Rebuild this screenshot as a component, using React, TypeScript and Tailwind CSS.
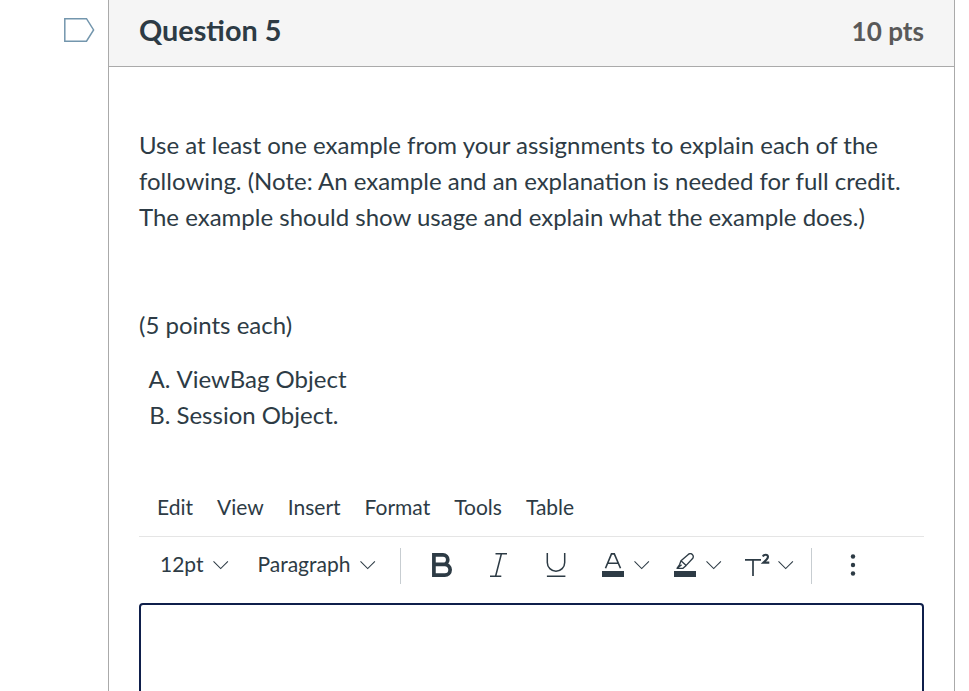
import React from "react";

function Chevron({ className = "" }: { className?: string }) {
  return (
    <svg className={`h-[10px] w-4 shrink-0 ${className}`} viewBox="0 0 16 10" fill="none" stroke="#2d3b45" strokeWidth="1.05">
      <path d="M.5 1.3 7.7 8.6 14.9 1.3" />
    </svg>
  );
}

function Divider({ className = "" }: { className?: string }) {
  return <div className={`mt-0.5 h-9 w-px shrink-0 bg-[#c7cdd1] ${className}`} />;
}

function BoldIcon() {
  return (
    <svg className="ml-[31px] h-6 w-5 shrink-0" viewBox="0 0 20 24" fill="none" stroke="#2d3b45" strokeWidth="3.7">
      <path d="M1.9 1.85H11a4.7 4.7 0 0 1 0 9.6H1.9M11 11.45h1.8a5.3 5.3 0 0 1 0 10.7H1.9V0" />
    </svg>
  );
}

function ItalicIcon() {
  return (
    <svg className="ml-[38px] h-6 w-[17px] shrink-0" viewBox="0 0 17 24" fill="none" stroke="#2d3b45" strokeWidth="1.5">
      <path d="M5.5.8H17M0 23.2h11.3M11.4.8 5.6 23.2" />
    </svg>
  );
}

function UnderlineIcon() {
  return (
    <svg className="ml-[39px] h-6 w-5 shrink-0" viewBox="0 0 20 24" fill="none" stroke="#2d3b45" strokeWidth="1.5">
      <path d="M1.3 0v9.5a8.7 8.7 0 0 0 17.4 0V0M.9 23.2h18.5" />
    </svg>
  );
}

function TextColorIcon() {
  return (
    <svg className="ml-9 h-6 w-[22px] shrink-0" viewBox="0 0 22 24" fill="none">
      <path d="M3.5 15.3 9.5.9h2.8l6.2 14.4M5.5 10.3h11" stroke="#2d3b45" strokeWidth="1.6" />
      <path d="M0 18h22v6H0z" fill="#2d3b45" />
    </svg>
  );
}

function HighlightIcon() {
  return (
    <svg className="ml-6 h-6 w-[22px] shrink-0" viewBox="0 0 22 24" fill="none">
      <path
        d="M7 7.8 14.3 1.4Q16.6-.2 18.3 1.5T18.8 5.3L12.2 12.4ZM7 7.8 5.6 11.6 3 15.3h6l3.2-2.9M3.2 15.3l4.4-3.6"
        stroke="#2d3b45"
        strokeWidth="1.35"
        strokeLinejoin="round"
      />
      <path d="M0 18h22v6H0z" fill="#2d3b45" />
    </svg>
  );
}

function SuperscriptIcon() {
  return (
    <svg className="ml-[23px] h-6 w-[25px] shrink-0" viewBox="0 0 25 24" fill="none" stroke="#2d3b45">
      <path d="M0 6.8h16M8 6.8V23" strokeWidth="1.7" />
      <path d="M17.9 3.5Q18.6 1.7 20.7 1.7T23 3.8Q23 5 21.6 6.4L18.3 9.6H24.3" strokeWidth="2.1" />
    </svg>
  );
}

function MoreIcon() {
  return (
    <svg className="ml-[38px] h-6 w-[6px] shrink-0" viewBox="0 0 6 24" fill="#2d3b45">
      <circle cx="3" cy="3.5" r="2.2" />
      <circle cx="3" cy="12" r="2.2" />
      <circle cx="3" cy="20.5" r="2.2" />
    </svg>
  );
}

export default function App() {
  return (
    <div className="flex h-[691px] w-[969px] overflow-hidden bg-white font-['Lato',sans-serif] text-[24px] leading-9 text-[#2d3b45]">
      <aside className="w-[108px] shrink-0 pt-[17px] pl-16">
        <svg className="h-[26px] w-[31px]" viewBox="0 0 31 26" fill="none" stroke="#7396ad" strokeWidth="1.5">
          <path d="M.8 1.7h21.7l7.1 11.2-7.1 11.3H.8z" />
        </svg>
      </aside>

      <main className="w-[847px] shrink-0 border-x border-[#aaaaaa]">
        <header className="flex h-[67px] justify-between border-b border-[#aaaaaa] bg-[#f5f5f5] px-[30px] font-bold">
          <h1 className="pt-[12px] text-[28.8px]">Question 5</h1>
          <span className="pt-[13px] text-[26.1px] text-[#595959]">10 pts</span>
        </header>

        <section className="px-[30px] pt-[60px]">
          <p className="whitespace-nowrap">
            Use at least one example from your assignments to explain each of the
            <br />
            following. (Note: An example and an explanation is needed for full credit.
            <br />
            The example should show usage and explain what the example does.)
          </p>
          <p className="mt-[72px]">(5 points each)</p>
          <ol className="mt-[18px] ml-[37.5px] list-[upper-alpha]">
            <li>ViewBag Object</li>
            <li>Session Object.</li>
          </ol>

          <div className="mt-[47px]">
            <nav className="flex h-[57px] gap-6 border-b border-[#e5e5e5] pt-[9px] pl-[18px] text-[21px]">
              <span>Edit</span>
              <span>View</span>
              <span>Insert</span>
              <span>Format</span>
              <span>Tools</span>
              <span>Table</span>
            </nav>
            <div className="flex h-[56px] items-center pl-[21px] text-[21px]">
              <span className="mb-[3px] w-[43px] shrink-0">12pt</span>
              <Chevron className="ml-[10px]" />
              <span className="mb-[3px] ml-[28.5px] w-[93px] shrink-0">Paragraph</span>
              <Chevron className="ml-[9.5px]" />
              <Divider className="ml-[24px]" />
              <BoldIcon />
              <ItalicIcon />
              <UnderlineIcon />
              <TextColorIcon />
              <Chevron className="ml-[10px]" />
              <HighlightIcon />
              <Chevron className="ml-[10px]" />
              <SuperscriptIcon />
              <Chevron className="ml-2" />
              <Divider className="ml-[17px]" />
              <MoreIcon />
            </div>
            <div className="mt-2.5 h-[120px] rounded-[4px] border-2 border-[#0f1f4b]" />
          </div>
        </section>
      </main>
    </div>
  );
}
